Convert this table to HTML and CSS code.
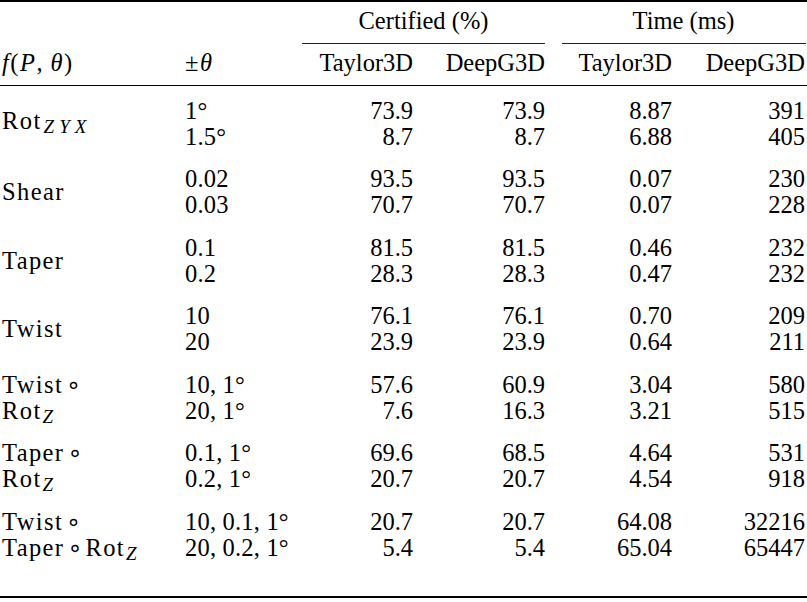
FILE: index.html
```html
<!DOCTYPE html>
<html>
<head>
<meta charset="utf-8">
<link rel="stylesheet" href="styles.css">
</head>
<body>
<div class="tbl">
  <div class="rule heavy top"></div>
  <div class="row">
    <div class="cell"></div>
    <div class="cell"></div>
    <div class="cell span34">Certified (%)</div>
    <div class="cell span56">Time (ms)</div>
  </div>
  <div class="cmid"><div class="cm-a"></div><div class="cm-b"></div></div>
  <div class="row">
    <div class="cell l1 math"><span class="mi">f</span>(<span class="mi">P</span>,&thinsp;<span class="mi">θ</span>)</div>
    <div class="cell l2 math">±<span class="mi">θ</span></div>
    <div class="cell r">Taylor3D</div>
    <div class="cell r">DeepG3D</div>
    <div class="cell r">Taylor3D</div>
    <div class="cell r r6">DeepG3D</div>
  </div>
  <div class="rule light mid"></div>

  <div class="group">
    <div class="cell l1 cm multi">Rot<span class="sub wide">ZYX</span></div>
    <div class="cell l2 arg">1°</div><div class="cell r">73.9</div><div class="cell r">73.9</div><div class="cell r">8.87</div><div class="cell r r6">391</div>
    <div class="cell l2 arg">1.5°</div><div class="cell r">8.7</div><div class="cell r">8.7</div><div class="cell r">6.88</div><div class="cell r r6">405</div>
  </div>
  <div class="group">
    <div class="cell l1 cm multi">Shear</div>
    <div class="cell l2 arg">0.02</div><div class="cell r">93.5</div><div class="cell r">93.5</div><div class="cell r">0.07</div><div class="cell r r6">230</div>
    <div class="cell l2 arg">0.03</div><div class="cell r">70.7</div><div class="cell r">70.7</div><div class="cell r">0.07</div><div class="cell r r6">228</div>
  </div>
  <div class="group">
    <div class="cell l1 cm multi">Taper</div>
    <div class="cell l2 arg">0.1</div><div class="cell r">81.5</div><div class="cell r">81.5</div><div class="cell r">0.46</div><div class="cell r r6">232</div>
    <div class="cell l2 arg">0.2</div><div class="cell r">28.3</div><div class="cell r">28.3</div><div class="cell r">0.47</div><div class="cell r r6">232</div>
  </div>
  <div class="group">
    <div class="cell l1 cm multi">Twist</div>
    <div class="cell l2 arg">10</div><div class="cell r">76.1</div><div class="cell r">76.1</div><div class="cell r">0.70</div><div class="cell r r6">209</div>
    <div class="cell l2 arg">20</div><div class="cell r">23.9</div><div class="cell r">23.9</div><div class="cell r">0.64</div><div class="cell r r6">211</div>
  </div>
  <div class="group">
    <div class="cell l1 cm">Twist<span class="op">∘</span></div>
    <div class="cell l2 arg">10, 1°</div><div class="cell r">57.6</div><div class="cell r">60.9</div><div class="cell r">3.04</div><div class="cell r r6">580</div>
    <div class="cell l1 cm">Rot<span class="sub">Z</span></div>
    <div class="cell l2 arg">20, 1°</div><div class="cell r">7.6</div><div class="cell r">16.3</div><div class="cell r">3.21</div><div class="cell r r6">515</div>
  </div>
  <div class="group">
    <div class="cell l1 cm">Taper<span class="op">∘</span></div>
    <div class="cell l2 arg">0.1, 1°</div><div class="cell r">69.6</div><div class="cell r">68.5</div><div class="cell r">4.64</div><div class="cell r r6">531</div>
    <div class="cell l1 cm">Rot<span class="sub">Z</span></div>
    <div class="cell l2 arg">0.2, 1°</div><div class="cell r">20.7</div><div class="cell r">20.7</div><div class="cell r">4.54</div><div class="cell r r6">918</div>
  </div>
  <div class="group">
    <div class="cell l1 cm">Twist<span class="op">∘</span></div>
    <div class="cell l2 arg">10, 0.1, 1°</div><div class="cell r">20.7</div><div class="cell r">20.7</div><div class="cell r">64.08</div><div class="cell r r6">32216</div>
    <div class="cell l1 cm">Taper<span class="op">∘</span>Rot<span class="sub">Z</span></div>
    <div class="cell l2 arg">20, 0.2, 1°</div><div class="cell r">5.4</div><div class="cell r">5.4</div><div class="cell r">65.04</div><div class="cell r r6">65447</div>
  </div>

  <div class="rule heavy bottom"></div>
</div>
</body>
</html>
```

FILE: styles.css
```css
html, body {
  margin: 0;
  padding: 0;
  background: #ffffff;
}
body {
  font-family: "Liberation Serif", "Times New Roman", serif;
  font-size: 24.5px;
  color: #000000;
}
.tbl {
  width: 807px;
}
.rule {
  background: #000000;
}
.heavy {
  height: 2px;
}
.light {
  height: 1.2px;
}
.top {
  margin-bottom: 7.2px;
}
.mid {
  margin: 4.4px 0 11.8px;
}
.bottom {
  margin-top: 35px;
}
.row,
.group {
  display: grid;
  grid-template-columns: 170px 133px 125px 132px 127px 120px;
}
.row {
  grid-auto-rows: 29.4px;
}
.row .cell {
  line-height: 24.6px;
}
.group {
  grid-auto-rows: 26px;
}
.group .cell {
  line-height: 26px;
}
.group + .group {
  margin-top: 16.5px;
}
.cell {
  white-space: nowrap;
}
.l1 {
  padding-left: 2px;
}
.l2 {
  padding-left: 15px;
}
.r {
  text-align: right;
  padding-right: 15px;
}
.r6 {
  padding-right: 2px;
}
.span34 {
  grid-column: 3 / span 2;
  text-align: center;
  padding-right: 16px;
}
.span56 {
  grid-column: 5 / span 2;
  text-align: center;
}
.cmid {
  display: grid;
  grid-template-columns: 302px 258px 247px;
  height: 1px;
  margin: 4.4px 0 7.2px;
}
.cm-a {
  grid-column: 2;
  background: #222222;
  margin-right: 15px;
}
.cm-b {
  grid-column: 3;
  background: #222222;
  margin-left: 2px;
  margin-right: 1px;
}
.multi {
  grid-row: span 2;
  align-self: center;
}
.cm {
  letter-spacing: 1.4px;
}
.arg {
  letter-spacing: 0.2px;
}
.math {
  letter-spacing: 1.5px;
}
.mi {
  font-style: italic;
}
.sub {
  font-style: italic;
  font-size: 19px;
  letter-spacing: 1px;
  vertical-align: -4px;
  margin-left: 1px;
}
.wide {
  letter-spacing: 5px;
  margin-left: 2px;
}
.op {
  display: inline-block;
  width: 21px;
  text-align: center;
  font-family: "DejaVu Sans", sans-serif;
  font-size: 24px;
  letter-spacing: 0;
  line-height: 1;
}
```
